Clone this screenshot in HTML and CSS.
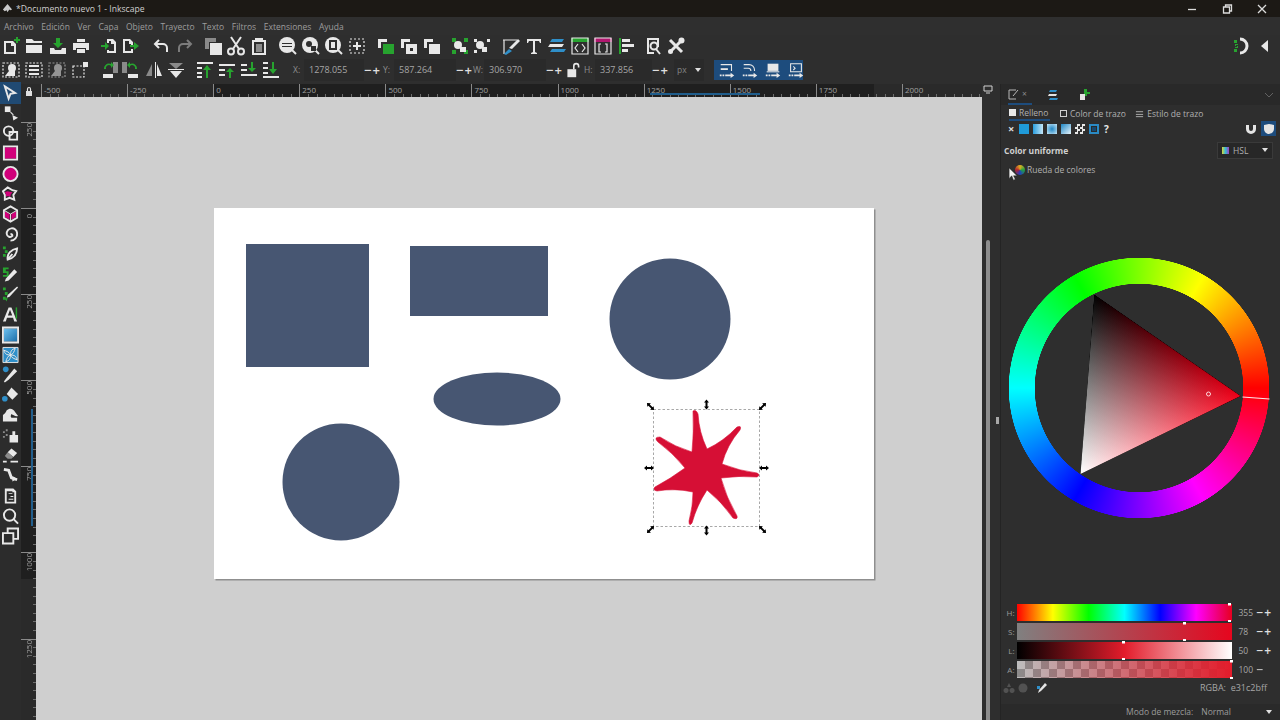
FILE: index.html
```html
<!DOCTYPE html>
<html lang="es">
<head>
    <meta charset="UTF-8">
    <title>*Documento nuevo 1 - Inkscape</title>
    <link rel="stylesheet" href="styles.css">
</head>
<body>
<div class="app">
    <!-- barra de titulo -->
    <div class="titlebar">
        <svg class="app-logo" viewBox="0 0 12 12"><path d="M6 1l5 6-2 1-1-1-2 3-1-2-2 1-2-2z"/></svg>
        <span class="title-text">*Documento nuevo 1 - Inkscape</span>
        <div class="win-buttons">
            <svg class="win-ic" viewBox="0 0 12 12"><path d="M2 6.5h8" /></svg>
            <svg class="win-ic" viewBox="0 0 12 12"><path d="M2.5 4h6v6h-6zM4.5 4V2h6v6h-2"/></svg>
            <svg class="win-ic" viewBox="0 0 12 12"><path d="M2 2l8 8M10 2l-8 8"/></svg>
        </div>
    </div>

    <div class="menubar">
        <span>Archivo</span><span>Edición</span><span>Ver</span><span>Capa</span><span>Objeto</span><span>Trayecto</span><span>Texto</span><span>Filtros</span><span>Extensiones</span><span>Ayuda</span>
    </div>

    <!-- comandos -->
    <div class="toolbar">
        <div class="grp g1">
            <svg class="ic" viewBox="0 0 20 20"><path d="M3 5h9l3 3v10H3zM5 7v9h8V10h-3V7z"/><path class="gr" d="M15 1h2v2h2v2h-2v2h-2V5h-2V3h2z"/></svg>
            <svg class="ic" viewBox="0 0 20 20"><path d="M2 3h6l2 2h8v2H2zM2 9h16v8H2z"/></svg>
            <svg class="ic" viewBox="0 0 20 20"><path d="M2 12h4l1 2h6l1-2h4v6H2z"/><path class="gr" d="M8 2h4v5h3l-5 5-5-5h3z"/></svg>
            <svg class="ic" viewBox="0 0 20 20"><path d="M6 3h8v3H6zM2 7h16v7h-3v-2H5v2H2zM6 13h8v4H6z"/></svg>
        </div>
        <div class="grp g2">
            <svg class="ic" viewBox="0 0 20 20"><path d="M8 3h6l3 3v11H8v-3h2v1h5V8h-3V5h-2v2H8z"/><path class="gr" d="M2 9h4V6l4 4-4 4v-3H2z"/></svg>
            <svg class="ic" viewBox="0 0 20 20"><path d="M3 3h7l3 3v3h-2V8H9V5H5v10h6v-2h2v4H3z"/><path class="gr" d="M10 9h4V6l5 4-5 4v-3h-4z"/></svg>
        </div>
        <div class="grp g3">
            <svg class="ic" viewBox="0 0 20 20"><path class="st" d="M4 8h8a4 4 0 0 1 4 4v4M8 4L4 8l4 4"/></svg>
            <svg class="ic" viewBox="0 0 20 20"><path class="st dim" d="M16 8H8a4 4 0 0 0-4 4v4M12 4l4 4-4 4"/></svg>
        </div>
        <div class="grp g4">
            <svg class="ic" viewBox="0 0 20 20"><path class="dim-fill" d="M2 2h11v4H6v7H2z"/><path d="M7 7h12v12H7z"/></svg>
            <svg class="ic" viewBox="0 0 20 20"><path class="st" d="M5 1l8 12M15 1L7 13"/><circle class="st" cx="5" cy="15.5" r="3"/><circle class="st" cx="15" cy="15.5" r="3"/></svg>
            <svg class="ic" viewBox="0 0 20 20"><path d="M3 4h3V2h8v2h3v15H3zM5 6v11h10V6z"/><path class="dim-fill" d="M7 8h6v8H7z"/></svg>
        </div>
        <div class="grp g5">
            <svg class="ic" viewBox="0 0 20 20"><circle cx="9" cy="9" r="8"/><path class="st" d="M14 14l4 4"/><path class="dark-fill" d="M4 7h10v1H4zM4 10h10v1H4z"/></svg>
            <svg class="ic" viewBox="0 0 20 20"><circle cx="9" cy="9" r="8"/><path class="st" d="M14 14l4 4"/><circle class="dark-fill" cx="8" cy="8" r="3"/><path class="dark-fill" d="M10 10h5v5h-5z"/></svg>
            <svg class="ic" viewBox="0 0 20 20"><circle cx="9" cy="9" r="8"/><path class="st" d="M14 14l4 4"/><path class="dark-fill" d="M5 4h8v10H5z"/><path d="M7 6h4v6H7z"/></svg>
            <svg class="ic" viewBox="0 0 20 20"><path class="thin" stroke-dasharray="2 2" d="M3 3h14v14H3z"/><path d="M9 6h2v3h3v2h-3v3H9v-3H6V9h3z"/></svg>
        </div>
        <div class="grp g6">
            <svg class="ic" viewBox="0 0 20 20"><path d="M2 3h9v3H5v6H2z"/><path class="gr" d="M7 8h11v10H7z"/></svg>
            <svg class="ic" viewBox="0 0 20 20"><path d="M2 3h9v3H5v6H2z"/><path d="M7 8h11v10H7zM11 12v3h3v-3z"/></svg>
            <svg class="ic" viewBox="0 0 20 20"><path d="M2 3h9v3H5v6H2z"/><path d="M7 8h11v10H7z"/></svg>
        </div>
        <div class="grp g7">
            <svg class="ic" viewBox="0 0 20 20"><path class="gr" d="M2 2h4v4H2zM14 2h4v4h-4zM2 14h4v4H2zM14 14h4v4h-4z"/><circle cx="8" cy="9" r="4"/><path d="M10 11h6v5h-6z"/></svg>
            <svg class="ic" viewBox="0 0 20 20"><circle cx="8" cy="9" r="4"/><path d="M10 11h5v5h-5zM2 3h3v3H2zM15 3h3v3h-3zM2 14h3v3H2z"/></svg>
        </div>
        <div class="grp g8">
            <svg class="ic" viewBox="0 0 20 20"><path class="thin" d="M2 4h14M3 4v14"/><path d="M17 3l2 2-8 8-3-1z"/><path class="bl" d="M8 13l3 2-6 4-2-1z"/></svg>
            <svg class="ic" viewBox="0 0 20 20"><path d="M3 3h14v4h-1l-1-2h-4v11l2 1v1H7v-1l2-1V5H5L4 7H3z"/></svg>
            <svg class="ic" viewBox="0 0 20 20"><path class="bl" d="M5 3h12l-2 3H3z"/><path d="M3 8h14l-2 3H1z"/><path class="bl" d="M5 13h14l-2 3H3z"/></svg>
            <svg class="ic" viewBox="0 0 20 20"><path class="gr" d="M1 2h18v4H1z"/><path class="thin" d="M2 2h16v16H2z"/><path class="thin" d="M8 8l-3 4 3 4M12 8l3 4-3 4"/></svg>
            <svg class="ic" viewBox="0 0 20 20"><path class="mg" d="M1 2h18v4H1z"/><path class="thin" d="M2 2h16v16H2z"/><path class="thin" d="M8 8H6v8h2M12 8h2v8h-2"/></svg>
            <svg class="ic" viewBox="0 0 20 20"><path class="gr" d="M3 2h2v16H3z"/><path d="M6 3h8v3H6zM6 8h12v3H6zM6 13h6v3H6z"/></svg>
        </div>
        <div class="grp g9">
            <svg class="ic" viewBox="0 0 20 20"><path d="M4 2h12v9h-2V4H6v12h5v2H4z"/><circle class="st" cx="11" cy="10" r="3.5"/><path class="st" d="M13 13l4 5"/></svg>
            <svg class="ic" viewBox="0 0 20 20"><path class="st thick" d="M4 16L16 4M4 4l12 12"/><circle cx="15.5" cy="4.5" r="3"/><circle cx="4.5" cy="15.5" r="2.5"/></svg>
        </div>
        <div class="grp g-right">
            <svg class="ic" viewBox="0 0 20 20"><path class="st thick" d="M9 3a7 7 0 1 1 0 14"/><path class="gr" d="M3 4h3v3H3zM3 13h3v3H3z"/><path class="gr" d="M4 8h3v1H5v1h2v2H4v-1h2v-1H4z"/></svg>
            <svg class="ic" viewBox="0 0 20 20"><path d="M13 4v12l-7-6z"/></svg>
        </div>
    </div>

    <!-- controles de seleccion -->
    <div class="controls">
        <div class="grp c1">
            <svg class="ic" viewBox="0 0 20 20"><path class="thin" stroke-dasharray="2 1.5" d="M2 3h16v14H2z"/><circle cx="11" cy="8" r="4"/><path d="M4 16l4-5h6v5z"/></svg>
            <svg class="ic" viewBox="0 0 20 20"><path class="thin" stroke-dasharray="2 1.5" d="M2 3h16v14H2z"/><path d="M5 5h10v2H5zM5 9h10v2H5zM5 13h10v2H5z"/></svg>
            <svg class="ic dim-ic" viewBox="0 0 20 20"><path class="thin" stroke-dasharray="2 1.5" d="M2 3h16v14H2z"/><circle cx="11" cy="8" r="4"/><path d="M4 16l4-5h6v5z"/></svg>
            <svg class="ic" viewBox="0 0 20 20"><path class="thin" stroke-dasharray="2 1.5" d="M3 6h11v11H3z"/><path d="M13 2h5v5h-5z"/></svg>
        </div>
        <div class="grp c2">
            <svg class="ic" viewBox="0 0 20 20"><path class="dim-fill" d="M12 2h5v11h-5z"/><path class="gr" d="M3 9a5 5 0 0 1 7-5V2l3 3-3 3V6a3 3 0 0 0-5 3z"/><path d="M2 14h10v4H2z"/></svg>
            <svg class="ic" viewBox="0 0 20 20"><path class="dim-fill" d="M2 2h5v11H2z"/><path class="gr" d="M17 9a5 5 0 0 0-7-5V2L7 5l3 3V6a3 3 0 0 1 5 3z"/><path d="M8 14h10v4H8z"/></svg>
            <svg class="ic" viewBox="0 0 20 20"><path class="dim-fill" d="M8 4v12H2z"/><path d="M11 2h1v16h-1zM13 4l5 12h-5z"/></svg>
            <svg class="ic" viewBox="0 0 20 20"><path class="dim-fill" d="M3 3h14L10 9z"/><path d="M2 9h16v1H2zM4 11h12l-6 7z"/></svg>
        </div>
        <div class="grp c3">
            <svg class="ic" viewBox="0 0 20 20"><path d="M2 2h16v2H2zM2 7h5v2H2zM2 12h5v2H2zM2 16h5v2H2z"/><path class="gr" d="M12 5l4 5h-3v8h-2v-8H8z"/></svg>
            <svg class="ic" viewBox="0 0 20 20"><path d="M2 4h16v2H2zM2 9h6v2H2zM2 14h6v2H2z"/><path class="gr" d="M13 8l4 4h-3v6h-2v-6H9z"/></svg>
            <svg class="ic" viewBox="0 0 20 20"><path d="M2 14h16v2H2zM2 4h6v2H2zM2 9h6v2H2z"/><path class="gr" d="M12 2h2v6h3l-4 4-4-4h3z"/></svg>
            <svg class="ic" viewBox="0 0 20 20"><path d="M2 16h16v2H2zM2 2h5v2H2zM2 7h5v2H2zM2 12h5v2H2z"/><path class="gr" d="M11 2h2v7h3l-4 5-4-5h3z"/></svg>
        </div>
        <div class="field f-x"><label>X:</label><span class="entry">1278.055</span><span class="pm">−+</span></div>
        <div class="field f-y"><label>Y:</label><span class="entry">587.264</span><span class="pm">−+</span></div>
        <div class="field f-w"><label>W:</label><span class="entry">306.970</span><span class="pm">−+</span></div>
        <svg class="ic lock-ic" viewBox="0 0 20 20"><path d="M3 9h11v10H3z"/><path class="st" d="M11 9V5a3 3 0 0 1 6 0v2"/></svg>
        <div class="field f-h"><label>H:</label><span class="entry">337.856</span><span class="pm">−+</span></div>
        <div class="unit-box"><span>px</span><i class="caret"></i></div>
        <div class="blue-btns">
            <svg class="ic" viewBox="0 0 20 20"><path class="thin" d="M3 4h12v7"/><path d="M3 8h8v2H3z"/><path d="M2 15h2v2H2zM5 15h2v2H5zM8 15h6v-2l4 3-4 3v-2H8z"/></svg>
            <svg class="ic" viewBox="0 0 20 20"><path class="thin" d="M3 4h6a6 6 0 0 1 6 6v1M3 8h5a3 3 0 0 1 3 3"/><path d="M2 15h2v2H2zM5 15h2v2H5zM8 15h6v-2l4 3-4 3v-2H8z"/></svg>
            <svg class="ic" viewBox="0 0 20 20"><path d="M4 3h12v8H4z"/><path class="thin" d="M3 12h14"/><path d="M2 15h2v2H2zM5 15h2v2H5zM8 15h6v-2l4 3-4 3v-2H8z"/></svg>
            <svg class="ic" viewBox="0 0 20 20"><path class="thin" d="M4 3h12v9H4zM7 6l2 2-2 2"/><path d="M2 15h2v2H2zM5 15h2v2H5zM8 15h6v-2l4 3-4 3v-2H8z"/></svg>
        </div>
    </div>

    <div class="main">
        <!-- herramientas -->
        <div class="toolbox">
            <svg class="tool tool-on" viewBox="0 0 18 18"><path class="st" d="M3 2l11 7-5 1-2 5z"/></svg>
            <svg class="tool" viewBox="0 0 18 18"><path d="M3 2h6v6H3z"/><path d="M11 11l6 3-5 3z"/><path class="thin" d="M9 8l3 3"/></svg>
            <svg class="tool" viewBox="0 0 18 18"><circle class="st" cx="7" cy="7" r="5"/><path class="st" d="M8 8h8v8H8z"/></svg>
            <svg class="tool" viewBox="0 0 18 18"><path class="pk" d="M3 3h12v12H3z"/><path d="M1 1h16v16H1zM3 3v12h12V3z"/></svg>
            <svg class="tool" viewBox="0 0 18 18"><circle class="pk" cx="9" cy="9" r="7"/><circle class="st" cx="9" cy="9" r="7.5"/></svg>
            <svg class="tool" viewBox="0 0 18 18"><path class="pk" d="M6 6l3 1 2 0-2 3 0 2-3-1-2 1 0-3-1-2z"/><path class="st" d="M6 2l5 3 4 1-3 4 1 5-5-2-5 2v-5l-2-4z"/></svg>
            <svg class="tool" viewBox="0 0 18 18"><path class="pk" d="M3 6l5 3v6l-5-3zM15 6l-5 3v6l5-3z"/><path class="st" d="M9 1l7 4v8l-7 4-7-4V5z"/><path class="st thin-st" d="M2 5l7 4 7-4M9 9v8"/></svg>
            <svg class="tool" viewBox="0 0 18 18"><path class="st" d="M9 9a2 2 0 0 1 2 2 3.500 3.500 0 0 1-6-2 5.500 5.500 0 0 1 11-1 7 7 0 0 1-7 8"/></svg>
            <svg class="tool" viewBox="0 0 18 18"><path class="gr" d="M1 1h3v3H1zM3 5h3v3H3zM1 9h3v3H1z"/><path class="st" d="M6 15C5 9 10 4 16 3c0 6-4 11-10 12zM6 15l5-6"/></svg>
            <svg class="tool" viewBox="0 0 18 18"><path class="gr" d="M1 2h6v2H4v2h3v6H1v-2h4V8H1z"/><path d="M4 14l9-10 3 3-9 9-4 1z"/></svg>
            <svg class="tool" viewBox="0 0 18 18"><path class="gr" d="M1 2h3v3H1zM3 7h3v3H3zM1 12h3v3H1z"/><path d="M16 1l1 1-9 10-3 1 1-3z"/><path class="gr" d="M3 14l3-1-1 4z"/></svg>
            <svg class="tool" viewBox="0 0 18 18"><path d="M1 17L7 2h3l6 15h-3l-1.300-4H5.300L4 17zM6.200 10.500h4.600L8.500 4.500z"/><path class="gr" d="M14.500 2h1.500v12h-1.500z"/></svg>
            <svg class="tool" viewBox="0 0 18 18"><defs><linearGradient id="gt" x2="1" y2="1"><stop offset="0" stop-color="#6fc2f0"/><stop offset="1" stop-color="#1c6ea8"/></linearGradient></defs><path fill="url(#gt)" d="M2 2h14v14H2z"/><path class="st" d="M1 1h16v16H1z"/></svg>
            <svg class="tool" viewBox="0 0 18 18"><path class="bl" d="M1 1h16v16H1z"/><path class="st thin-st" d="M1 1h16v16H1zM9 9c0-4 1-6 5-7-1 3-2 6-5 7zm0 0c4 0 6 1 7 5-3-1-6-2-7-5zm0 0c0 4-1 6-5 7 1-3 2-6 5-7zm0 0c-4 0-6-1-7-5 3 1 6 2 7 5z"/></svg>
            <svg class="tool" viewBox="0 0 18 18"><circle class="bl" cx="4" cy="3" r="3"/><path d="M13 2l3 3-9 9-4 3-1-1 3-4z"/></svg>
            <svg class="tool" viewBox="0 0 18 18"><circle class="bl" cx="3" cy="13" r="3"/><path d="M10 1l7 7-6 6-6-6z"/></svg>
            <svg class="tool" viewBox="0 0 18 18"><path d="M1 16V9c2-1 3-3 4-5 3-3 7-2 9 2l3 4c-3 1-5-1-7-2-1 2-1 3 0 4h6v4z"/></svg>
            <svg class="tool" viewBox="0 0 18 18"><path d="M8 9h3V5h3v4h3v8H8z"/><path class="dim-fill" d="M1 5h2v2H1zM4 3h2v2H4zM4 8h2v2H4zM1 10h2v2H1z"/></svg>
            <svg class="tool" viewBox="0 0 18 18"><path d="M10 2l6 5-4 4-6-5z"/><path class="dim-fill" d="M6 6l6 5-2 2H6l-3-3z"/><path d="M1 15h4v2H1zM9 15h8v2H9z"/></svg>
            <svg class="tool" viewBox="0 0 18 18"><path class="st thick" d="M2 3l5 1 3 8 6 2"/><path d="M11 10v6l5-3z"/></svg>
            <svg class="tool" viewBox="0 0 18 18"><path d="M3 1h9l3 3v13H3zM5 4v11h8V5h-2V4zM7 6h4v1H7zM9 9h3v1H9zM7 12h5v1H7z"/></svg>
            <svg class="tool" viewBox="0 0 18 18"><circle class="st" cx="8" cy="8" r="6"/><path class="st" d="M12 12l5 5"/></svg>
            <svg class="tool" viewBox="0 0 18 18"><path class="st" d="M1 6h11v11H1zM6 6V1h11v11h-5"/></svg>
        </div>

        <div class="workspace">
            <div class="ruler-row">
                <div class="ruler-corner"><svg class="lock-mini" viewBox="0 0 10 10"><path d="M2 5h6v5H2z"/><path class="thin" d="M3.500 5V3a1.500 1.500 0 0 1 3 0v2"/></svg></div>
                <div class="hruler">
                    <span>-500</span><span>-250</span><span>0</span><span>250</span><span>500</span><span>750</span><span>1000</span><span>1250</span><span>1500</span><span>1750</span><span>2000</span>
                    <i class="sel-mark-h"></i>
                </div>
            </div>
            <div class="canvas-row">
                <div class="vruler">
                    <div><span>250</span></div><div><span>0</span></div><div><span>250</span></div><div><span>500</span></div><div><span>750</span></div><div><span>1000</span></div><div><span>1250</span></div>
                    <i class="sel-mark-v"></i>
                </div>
                <!-- lienzo, coordenadas de pantalla -->
                <svg class="canvas" viewBox="36 97 946 623">
                    <defs>
                        <path id="h-arrow" d="M-5 0L-2 -2.500V-1H2V-2.500L5 0 2 2.500V1H-2V2.500Z"/>
                    </defs>
                    <rect class="page-shadow" x="215.500" y="209.500" width="660" height="371"/>
                    <rect class="page" x="214" y="208" width="660" height="371"/>
                    <rect class="shape" x="246" y="244" width="123" height="123"/>
                    <rect class="shape" x="410" y="246" width="138" height="70"/>
                    <circle class="shape" cx="670" cy="319" r="60.500"/>
                    <ellipse class="shape" cx="497" cy="399" rx="63.500" ry="26.500"/>
                    <circle class="shape" cx="341" cy="482" r="58.500"/>
                    <path class="star" d="M693 411Q696 409 698 414Q699 432 707 449Q724 441 737 427Q742 425 740 430Q727 445 722 464Q740 471 757 473Q761 475 757 477Q739 475.500 721 478Q726 497 737 516Q738 520 733 518Q722 502 707 490Q697 505 692 523Q689 527 689 521Q693 506 693 492Q675 488 657 491Q652 490 655 487Q670 479 685 468Q673 453 658 442Q653 437 660 437Q675 447 692 452Q694 432 693 411Z"/>
                    <rect class="sel-box" x="653.500" y="409.500" width="106" height="117"/>
                    <use href="#h-arrow" transform="translate(650.500 406.500) rotate(45)"/>
                    <use href="#h-arrow" transform="translate(762.500 406.500) rotate(-45)"/>
                    <use href="#h-arrow" transform="translate(650.500 529.500) rotate(-45)"/>
                    <use href="#h-arrow" transform="translate(762.500 529.500) rotate(45)"/>
                    <use href="#h-arrow" transform="translate(706.500 404.500) rotate(90)"/>
                    <use href="#h-arrow" transform="translate(706.500 530.500) rotate(90)"/>
                    <use href="#h-arrow" transform="translate(649 468)"/>
                    <use href="#h-arrow" transform="translate(764 468)"/>
                </svg>
            </div>
        </div>

        <div class="scroll-col">
            <svg class="mini-screen" viewBox="0 0 10 10"><path d="M1 2h8v5H1zM3 9h4"/></svg>
            <div class="scroll-thumb"></div>
            <i class="pane-grip"></i>
        </div>

        <!-- panel relleno y borde -->
        <div class="panel">
            <div class="dock-tabs">
                <div class="dock-tab dock-tab-on">
                    <svg class="pi" viewBox="0 0 12 12"><path class="pl" d="M1 2h7M1 2v9h7M10 2L5 8"/></svg>
                    <span class="dock-x">×</span>
                </div>
                <svg class="pi dock-2" viewBox="0 0 12 12"><path class="bl" d="M3 1h7L9 3H2z"/><path d="M2 5h8L9 7H1z"/><path class="bl" d="M3 9h8l-1 2H2z"/></svg>
                <svg class="pi dock-3" viewBox="0 0 12 12"><path class="gr" d="M6 0h3v3h3v2H9v2H6z"/><path d="M2 5h5v6H2z"/></svg>
                <svg class="pi dock-chev" viewBox="0 0 12 12"><path class="pl" d="M2 4l4 4 4-4"/></svg>
            </div>
            <div class="sub-tabs">
                <div class="sub-tab sub-on"><i class="sq-fill"></i><span>Relleno</span></div>
                <div class="sub-tab"><i class="sq-line"></i><span>Color de trazo</span></div>
                <div class="sub-tab"><svg class="mini-lines" viewBox="0 0 10 10"><path d="M1 3h8M1 6h8M1 8.500h8"/></svg><span>Estilo de trazo</span></div>
            </div>
            <div class="paint-row">
                <span class="paint-x">×</span>
                <i class="pt pt-flat"></i><i class="pt pt-linear"></i><i class="pt pt-radial"></i><i class="pt pt-mesh"></i><i class="pt pt-grid"></i><i class="pt pt-swatch"></i>
                <span class="paint-q">?</span>
                <svg class="pi rule-a" viewBox="0 0 12 12"><path d="M1 2h3v4a2 2 0 0 0 4 0V2h3v4a5 5 0 0 1-10 0z"/></svg>
                <div class="rule-b"><svg class="pi" viewBox="0 0 12 12"><path d="M1 2c2 0 3-1 5-1s3 1 5 1v4c0 3-3 5-5 5S1 9 1 6z"/></svg></div>
            </div>
            <div class="mode-row">
                <b>Color uniforme</b>
                <div class="hsl-box"><i class="hsl-swatch"></i><span>HSL</span><i class="caret"></i></div>
            </div>
            <div class="wheel-head">
                <div class="mini-wheel"></div>
                <span>Rueda de colores</span>
                <svg class="cursor" viewBox="0 0 12 16"><path d="M1 1v12l3-3 2 5 2-1-2-4h4z"/></svg>
            </div>
            <div class="wheel-wrap">
                <div class="wheel-ring"></div>
                <svg class="wheel-tri" viewBox="1008.500 257 262 262">
                    <defs>
                        <linearGradient id="g-hue" gradientUnits="userSpaceOnUse" x1="1241" y1="396" x2="1088" y2="384"><stop offset="0" stop-color="#f00018"/><stop offset="1" stop-color="#000"/></linearGradient>
                        <linearGradient id="g-white" gradientUnits="userSpaceOnUse" x1="1081" y1="474" x2="1169.300" y2="346.400"><stop offset="0" stop-color="#fff"/><stop offset="1" stop-color="#000"/></linearGradient>
                    </defs>
                    <g class="tri-group">
                        <polygon points="1241,396 1095,295 1081,474" fill="#000"/>
                        <polygon class="tri-add" points="1241,396 1095,295 1081,474" fill="url(#g-hue)"/>
                        <polygon class="tri-add" points="1241,396 1095,295 1081,474" fill="url(#g-white)"/>
                    </g>
                    <path class="hue-line" d="M1243 397L1270 399"/>
                    <circle class="pick-dot" cx="1209" cy="394" r="2"/>
                </svg>
            </div>
            <div class="sliders">
                <label>H:</label><div class="bar bar-h"><i class="mark"></i></div><span class="val">355</span><span class="pm">−+</span>
                <label>S:</label><div class="bar bar-s"><i class="mark"></i></div><span class="val">78</span><span class="pm">−+</span>
                <label>L:</label><div class="bar bar-l"><i class="mark"></i></div><span class="val">50</span><span class="pm">−+</span>
                <label>A:</label><div class="bar bar-a"><i class="mark"></i></div><span class="val">100</span><span class="pm pm-off">−</span>
            </div>
            <div class="rgba-row">
                <svg class="pi faint" viewBox="0 0 12 12"><path d="M6 1l2 4H4zM3 6a2.500 2.500 0 1 0 .1 0M9 6a2.500 2.500 0 1 0 .1 0"/></svg>
                <svg class="pi faint" viewBox="0 0 12 12"><circle cx="6" cy="6" r="4.500"/></svg>
                <svg class="pi picker" viewBox="0 0 12 12"><path class="bl" d="M1 4h3v3H1z"/><path d="M9 1l2 2-6 6-3 2 1-3z"/></svg>
                <span class="rgba-text">RGBA:&nbsp; e31c2bff</span>
            </div>
            <div class="blend-row">
                <span>Modo de mezcla:</span><span class="blend-val">Normal</span><i class="caret"></i>
            </div>
        </div>
    </div>
</div>
</body>
</html>
```

FILE: styles.css
```css
* {
    box-sizing: border-box;
}

body {
    margin: 0;
    background-color: #2e2e2e;
    font-family: "Open Sans", "Noto Sans", sans-serif;
    font-size: 8.5px;
    color: #b5b5b5;
    overflow: hidden;
}

.app {
    display: flex;
    flex-direction: column;
    width: 1280px;
    height: 720px;
    overflow: hidden;
}

/* titulo */
.titlebar {
    display: flex;
    align-items: center;
    height: 17px;
    background-color: #1c1915;
    color: #cfcfcf;
}

.app-logo {
    width: 11px;
    height: 11px;
    margin-left: 2px;
    fill: #c9c9c9;
}

.title-text {
    margin-left: 3px;
    font-size: 8.6px;
}

.win-buttons {
    display: flex;
    margin-left: auto;
    gap: 23px;
    padding-right: 12px;
}

.win-ic {
    width: 12px;
    height: 12px;
    fill: none;
    stroke: #dcdcdc;
    stroke-width: 1.3;
}

.menubar {
    display: flex;
    align-items: center;
    gap: 7.6px;
    height: 18px;
    padding-left: 4px;
    background-color: #2f2f2f;
    color: #9d9d9d;
}

/* barras */
.toolbar {
    display: flex;
    align-items: center;
    height: 22px;
    background-color: #2e2e2e;
}

.controls {
    display: flex;
    align-items: center;
    height: 27px;
    padding-bottom: 2px;
    background-color: #2e2e2e;
}

.grp {
    display: flex;
    align-items: center;
}

.ic {
    width: 20px;
    height: 20px;
    margin: 0 1px;
    flex: none;
    fill: #e8e8e8;
    fill-rule: evenodd;
}

.gr { fill: #27a32f; }
.bl { fill: #2f8fc9; }
.mg { fill: #b0176f; }
.pk { fill: #d1007a; }
.dim-fill { fill: #8a8a8a; }
.dark-fill { fill: #2e2e2e; }
.dim-ic { opacity: 0.55; }

.st {
    fill: none;
    stroke: #e8e8e8;
    stroke-width: 2;
}

.st.dim { stroke: #7c7c7c; }
.st.thick { stroke-width: 3; }
.st.thin-st { stroke-width: 1; }

.thin {
    fill: none;
    stroke: #e8e8e8;
    stroke-width: 1.2;
}

.g1 { gap: 1.3px; }
.g2 { margin-left: 7px; }
.g2 .ic { margin: 0 0.5px; }
.g3 { gap: 2px; margin-left: 9px; }
.g4 { gap: 1px; margin-left: 6px; }
.g5 { gap: 1px; margin-left: 7px; }
.g6 { gap: 1px; margin-left: 7px; }
.g7 { margin-left: 6px; }
.g8 { gap: 1px; margin-left: 7px; }
.g9 { gap: 1px; margin-left: 5px; }
.g-right { gap: 2px; margin-left: auto; padding-right: 4px; }

.c1 { gap: 1px; }
.c2 { margin-left: 9px; }
.c2 .ic:nth-child(2) { margin-left: -2px; }
.c2 .ic:nth-child(3) { margin-left: 3px; }
.c3 { margin-left: 7px; }

.field {
    display: flex;
    align-items: center;
    height: 22px;
}

.field label {
    width: 11px;
    flex: none;
    color: #8f8f8f;
}

.entry {
    display: flex;
    align-items: center;
    flex: none;
    height: 22px;
    padding-left: 5px;
    background-color: #2a2a2a;
    color: #a6a6a6;
    font-size: 9px;
}

.pm {
    color: #e0e0e0;
    font-size: 13px;
    font-weight: 600;
    letter-spacing: 1px;
    white-space: nowrap;
}

.f-x { width: 86px; margin-left: 11px; }
.f-x .entry { width: 60px; }
.f-y { width: 87px; margin-left: 4px; }
.f-y .entry { width: 62px; }
.f-w { width: 87px; margin-left: 3px; }
.f-w .entry { width: 62px; }
.f-h { width: 84px; margin-left: 3px; }
.f-h .entry { width: 57px; }

.lock-ic {
    width: 16px;
    height: 16px;
    margin: 0 0 0 5px;
}

.unit-box {
    display: flex;
    align-items: center;
    justify-content: space-between;
    width: 30px;
    height: 22px;
    margin-left: 6px;
    padding: 0 3px;
    background-color: #2a2a2a;
    color: #858585;
}

.caret {
    width: 0;
    height: 0;
    border-left: 3.5px solid transparent;
    border-right: 3.5px solid transparent;
    border-top: 4px solid #e0e0e0;
}

.blue-btns {
    display: flex;
    align-items: center;
    width: 89px;
    height: 20px;
    margin-left: 10px;
    padding: 0 1px;
    background-color: #1d4c7d;
}

.blue-btns .ic {
    width: 18px;
    height: 18px;
    margin: 0 2.500px;
}

.main {
    display: flex;
    flex: 1;
    min-height: 0;
}

/* herramientas */
.toolbox {
    display: flex;
    flex-direction: column;
    align-items: center;
    gap: 2.140px;
    width: 21px;
    flex: none;
    background-color: #2c2c2c;
}

.tool {
    width: 17px;
    height: 18px;
    flex: none;
    fill: #e8e8e8;
    fill-rule: evenodd;
}

.tool-on {
    background-color: #204a73;
    outline: 2px solid #204a73;
}

.workspace {
    display: flex;
    flex-direction: column;
    width: 961px;
    flex: none;
}

.ruler-row {
    display: flex;
    height: 13px;
    flex: none;
}

.ruler-corner {
    display: flex;
    align-items: center;
    justify-content: center;
    width: 15px;
    background-color: #2a2a2a;
}

.lock-mini {
    width: 10px;
    height: 10px;
    fill: #e0e0e0;
}

.hruler {
    position: relative;
    display: flex;
    width: 946px;
    padding-left: 5px;
    overflow: hidden;
    background:
        repeating-linear-gradient(to right, #6d6d6d 0 1px, transparent 1px 8.610px) 5px 100% / 100% 3px no-repeat,
        linear-gradient(to right, #2a2a2a 178px, #1f1f1f 178px, #1f1f1f 838px, #2a2a2a 838px);
}

.hruler span {
    flex: 0 0 86.100px;
    padding-left: 2px;
    border-left: 1px solid #8a8a8a;
    font-size: 8px;
    line-height: 11px;
    color: #a0a0a0;
}

.sel-mark-h {
    position: absolute;
    left: 614px;
    top: 9px;
    width: 110px;
    height: 2px;
    background-color: #1f5d8c;
}

.canvas-row {
    display: flex;
    flex: 1;
    min-height: 0;
}

.vruler {
    position: relative;
    display: flex;
    flex-direction: column;
    width: 15px;
    flex: none;
    padding-top: 25px;
    overflow: hidden;
    background:
        repeating-linear-gradient(to bottom, #6d6d6d 0 1px, transparent 1px 8.610px) 100% 25px / 3px 100% no-repeat,
        linear-gradient(to bottom, #2a2a2a 111px, #1f1f1f 111px, #1f1f1f 482px, #2a2a2a 482px);
}

.vruler div {
    height: 86.100px;
    flex: none;
    border-top: 1px solid #8a8a8a;
    text-align: center;
    line-height: 12px;
}

.vruler span {
    display: inline-block;
    writing-mode: vertical-rl;
    transform: rotate(180deg);
    font-size: 8px;
    color: #a0a0a0;
}

.sel-mark-v {
    position: absolute;
    left: 10px;
    top: 312px;
    width: 2px;
    height: 117px;
    background-color: #1f5d8c;
}

.canvas {
    display: block;
    width: 946px;
    height: 623px;
    flex: none;
    background-color: #cfcfcf;
}

.page { fill: #ffffff; }
.page-shadow { fill: #8f8f8f; }
.shape { fill: #475672; }

.star {
    fill: #d60f35;
    stroke: #d60f35;
    stroke-width: 0.6;
    stroke-linejoin: round;
}

.sel-box {
    fill: none;
    stroke: #a8a8a8;
    stroke-width: 1;
    stroke-dasharray: 2.500 2;
}

.scroll-col {
    position: relative;
    width: 19px;
    flex: none;
    border-right: 1px solid #242424;
    background-color: #2e2e2e;
}

.mini-screen {
    display: block;
    width: 10px;
    height: 10px;
    margin: 0 0 0 1px;
    fill: none;
    stroke: #d0d0d0;
}

.scroll-thumb {
    position: absolute;
    left: 4px;
    top: 156px;
    width: 4px;
    height: 490px;
    border-radius: 2px;
    background-color: #8d8d8d;
}

.pane-grip {
    position: absolute;
    left: 14px;
    top: 333px;
    width: 3px;
    height: 7px;
    background-color: #a8a8a8;
}

/* panel */
.panel {
    display: flex;
    flex-direction: column;
    flex: 1;
    min-width: 0;
    background-color: #2e2e2e;
    color: #b0b0b0;
}

.pi {
    width: 12px;
    height: 12px;
    flex: none;
    fill: #e4e4e4;
    fill-rule: evenodd;
}

.pl {
    fill: none;
    stroke: #b9b9b9;
    stroke-width: 1;
}

.dock-tabs {
    display: flex;
    align-items: center;
    height: 21px;
    padding-left: 7px;
    background-color: #292929;
}

.dock-tab {
    display: flex;
    align-items: center;
    gap: 2px;
    height: 21px;
    padding: 0 7px 0 0;
    border-bottom: 2px solid #1d4c7d;
    width: 24px;
}

.dock-x {
    color: #8c8c8c;
}

.dock-2 { margin-left: 15px; }
.dock-3 { margin-left: 19px; }
.dock-chev { margin-left: auto; margin-right: 5px; opacity: 0.4; }

.sub-tabs {
    display: flex;
    align-items: center;
    gap: 9.500px;
    height: 16px;
    padding-left: 8px;
}

.sub-tab {
    display: flex;
    align-items: center;
    gap: 3px;
    height: 16px;
}

.sub-on {
    border-bottom: 2px solid #1d4c7d;
    padding-right: 2px;
}

.sq-fill {
    width: 7px;
    height: 7px;
    background-color: #e8e8e8;
}

.sq-line {
    width: 7px;
    height: 7px;
    border: 1px solid #d0d0d0;
}

.mini-lines {
    width: 9px;
    height: 9px;
    fill: none;
    stroke: #b5b5b5;
}

.paint-row {
    display: flex;
    align-items: center;
    gap: 4px;
    height: 16px;
    padding-left: 7px;
}

.paint-x {
    width: 7px;
    font-size: 11px;
    font-weight: 700;
    color: #dedede;
}

.pt {
    width: 10px;
    height: 10px;
    background-color: #1f9ad8;
}

.pt-linear { background: linear-gradient(to right, #2a9fe0, #c5e6f7); }
.pt-radial { background: radial-gradient(circle, #1f86c4, #c5e6f7); }
.pt-mesh { background: linear-gradient(135deg, #1f86c4, #e8f4fb); }
.pt-grid {
    background: repeating-conic-gradient(#e8e8e8 0 25%, #333 0 50%) 0 0 / 5px 5px;
}
.pt-swatch {
    border: 2px solid #2a8ac4;
    background-color: #15486f;
    box-shadow: inset 0 0 0 1px #2a2a2a;
}

.paint-q {
    margin-left: 1px;
    font-size: 10px;
    font-weight: 700;
    color: #e8e8e8;
}

.rule-a { margin-left: auto; }

.rule-b {
    display: flex;
    align-items: center;
    justify-content: center;
    width: 15px;
    height: 15px;
    margin-right: 4px;
    background-color: #1d4c7d;
}

.mode-row {
    display: flex;
    align-items: center;
    justify-content: space-between;
    height: 18px;
    margin-top: 5px;
    padding: 0 7px 0 3px;
}

.mode-row b {
    color: #d0d0d0;
}

.hsl-box {
    display: flex;
    align-items: center;
    gap: 4px;
    width: 56px;
    height: 17px;
    padding: 0 4px;
    background-color: #272727;
    border: 1px solid #3a3a3a;
}

.hsl-swatch {
    width: 7px;
    height: 7px;
    background: linear-gradient(to right, #d8d838, #38b8d8 50%, #a040c0);
}

.hsl-box .caret {
    margin-left: auto;
}

.wheel-head {
    position: relative;
    display: flex;
    align-items: center;
    gap: 2px;
    height: 18px;
    margin-top: 2px;
    padding-left: 14px;
}

.mini-wheel {
    width: 10px;
    height: 10px;
    border-radius: 50%;
    background: conic-gradient(#e0b020, #20a040, #2040c0, #b02030, #e0b020);
}

.cursor {
    position: absolute;
    left: 7px;
    top: 6px;
    width: 11px;
    height: 14px;
    fill: #f2f2f2;
    stroke: #222;
    stroke-width: 0.5;
}

.wheel-wrap {
    position: relative;
    width: 262px;
    height: 262px;
    margin: 79px 0 0 6.500px;
    flex: none;
}

.wheel-ring {
    width: 262px;
    height: 262px;
    border-radius: 50%;
    background: conic-gradient(from 90deg, #f00, #f0f, #00f, #0ff, #0f0, #ff0, #f00);
    -webkit-mask: radial-gradient(circle, transparent 104px, #000 104.500px, #000 130px, transparent 130.500px);
    mask: radial-gradient(circle, transparent 104px, #000 104.500px, #000 130px, transparent 130.500px);
}

.wheel-tri {
    position: absolute;
    left: 0;
    top: 0;
    width: 262px;
    height: 262px;
}

.tri-group { isolation: isolate; }
.tri-add { mix-blend-mode: plus-lighter; }

.hue-line {
    fill: none;
    stroke: #ffe6e6;
    stroke-width: 1.200;
}

.pick-dot {
    fill: none;
    stroke: #ffd8dc;
    stroke-width: 1;
}

.sliders {
    display: grid;
    grid-template-columns: 15.500px 215px 26px 24px;
    grid-auto-rows: 17px;
    row-gap: 2px;
    align-items: center;
    margin-top: 85px;
    padding-left: 0;
}

.sliders label {
    justify-self: end;
    padding-right: 2px;
    color: #9a9a9a;
    font-size: 8px;
}

.bar {
    position: relative;
    height: 17px;
}

.bar-h { background: linear-gradient(to right, #f00, #ff0, #0f0, #0ff, #00f, #f0f, #e6001f); }
.bar-s { background: linear-gradient(to right, #808080, #e6061e); }
.bar-l { background: linear-gradient(to right, #000, #e31c2b 50%, #fff); }
.bar-a {
    background:
        linear-gradient(to right, rgba(227, 28, 43, 0), #e31c2b),
        repeating-conic-gradient(#8c8c8c 0 25%, #bdbdbd 0 50%) 0 0 / 16px 16px;
}

.mark {
    position: absolute;
    top: -1px;
    bottom: -1px;
    width: 3px;
    background:
        linear-gradient(#fff, #fff) top / 3px 2.500px no-repeat,
        linear-gradient(#fff, #fff) bottom / 3px 2.500px no-repeat;
}

.bar-h .mark { left: 211px; }
.bar-s .mark { left: 166px; }
.bar-l .mark { left: 105px; }
.bar-a .mark { left: 213px; }

.val {
    padding-left: 7px;
    color: #a6a6a6;
}

.sliders .pm {
    font-size: 12px;
    margin-left: -1px;
}

.pm-off { opacity: 0.8; }

.rgba-row {
    display: flex;
    align-items: center;
    gap: 2px;
    height: 18px;
    margin-top: 1px;
    padding-left: 2px;
}

.faint { opacity: 0.2; }
.picker { margin-left: 5px; }

.rgba-text {
    margin-left: auto;
    margin-right: 13px;
    color: #a6a6a6;
    font-size: 9px;
}

.blend-row {
    display: flex;
    align-items: center;
    height: 17px;
    margin-top: 7px;
    padding-left: 125px;
    padding-right: 8px;
    background-color: #2a2a2a;
    color: #9c9c9c;
}

.blend-val {
    margin-left: 8px;
}

.blend-row .caret {
    margin-left: auto;
}
```
